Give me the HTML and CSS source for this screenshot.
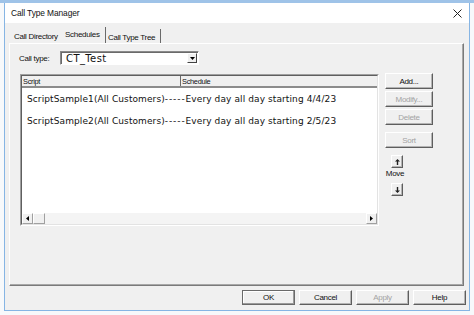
FILE: index.html
```html
<!DOCTYPE html>
<html>
<head>
<meta charset="utf-8">
<link rel="stylesheet" href="styles.css">
</head>
<body>
<div class="desk"></div>
<div class="window">
  <div class="titlebar">
    <span class="title">Call Type Manager</span>
    <svg class="close" width="9" height="9" viewBox="0 0 9 9"><path d="M0.5 0.5L8.5 8.5M8.5 0.5L0.5 8.5" stroke="#222" stroke-width="1"/></svg>
  </div>
  <div class="client">
    <div class="tabs">
      <div class="tab tab-dir">Call Directory</div>
      <div class="tab tab-sel">Schedules</div>
      <div class="tab tab-tree">Call Type Tree</div>
    </div>
    <div class="panel">
      <div class="typerow">
        <span class="label">Call type:</span>
        <div class="combo">
          <span class="combo-text">CT_Test</span>
          <div class="combo-btn"><svg width="5" height="3" viewBox="0 0 5 3"><path d="M0 0H5L2.5 3Z" fill="#000"/></svg></div>
        </div>
      </div>
      <div class="mainrow">
        <div class="list">
          <div class="list-in">
            <div class="lhead">
              <div class="hcell hcell-script">Script</div>
              <div class="hcell hcell-sched">Schedule</div>
            </div>
            <div class="lbody">
              <div class="lrow">ScriptSample1(All Customers)<span class="dash">-----</span>Every day all day starting 4/4/23</div>
              <div class="lrow">ScriptSample2(All Customers)<span class="dash">-----</span>Every day all day starting 2/5/23</div>
            </div>
            <div class="hscroll">
              <div class="sbtn"><svg width="3" height="5" viewBox="0 0 3 5"><path d="M3 0V5L0 2.5Z" fill="#000"/></svg></div>
              <div class="sbtn thumb"></div>
              <div class="track"></div>
              <div class="sbtn"><svg width="3" height="5" viewBox="0 0 3 5"><path d="M0 0V5L3 2.5Z" fill="#000"/></svg></div>
            </div>
          </div>
        </div>
        <div class="side">
          <div class="btn sidebtn">Add...</div>
          <div class="btn sidebtn dis">Modify...</div>
          <div class="btn sidebtn dis">Delete</div>
          <div class="btn sidebtn dis sort">Sort</div>
          <div class="move">
            <div class="btn arrowbtn"><svg width="5" height="6" viewBox="0 0 5 6"><path d="M2.5 0L5 2.5H3.2V6H1.8V2.5H0Z" fill="#222"/></svg></div>
            <div class="movelabel">Move</div>
            <div class="btn arrowbtn"><svg width="5" height="6" viewBox="0 0 5 6"><path d="M2.5 6L5 3.5H3.2V0H1.8V3.5H0Z" fill="#222"/></svg></div>
          </div>
        </div>
      </div>
    </div>
    <div class="footer">
      <div class="btn fbtn default">OK</div>
      <div class="btn fbtn">Cancel</div>
      <div class="btn fbtn dis">Apply</div>
      <div class="btn fbtn">Help</div>
    </div>
  </div>
</div>
</body>
</html>
```

FILE: styles.css
```css
html, body {
  margin: 0;
  padding: 0;
}
body {
  width: 474px;
  height: 315px;
  overflow: hidden;
  background: #f7f9fb;
  font-family: "Liberation Sans", Arial, sans-serif;
  color: #111;
}
.desk {
  height: 3px;
  background: #9fc3e8;
}
.window {
  margin-left: 4px;
  width: 466px;
  height: 308px;
  box-sizing: border-box;
  border: 1px solid #86b5e4;
  border-top: none;
  background: #f0f0f0;
  display: flex;
  flex-direction: column;
}
.titlebar {
  height: 20px;
  background: #fff;
  display: flex;
  align-items: center;
  padding-left: 6px;
  padding-right: 6px;
  justify-content: space-between;
}
.title {
  font-size: 8.4px;
  color: #111;
  letter-spacing: -0.1px;
}
.close {
  margin-right: 1px;
}
.client {
  flex: 1;
  padding: 4px 3px 0 4px;
  display: flex;
  flex-direction: column;
}
.tabs {
  height: 16px;
  display: flex;
  font-size: 8px;
  letter-spacing: -0.3px;
}
.tab {
  display: flex;
  align-items: center;
  box-sizing: border-box;
}
.tab-dir {
  width: 51px;
  padding-left: 5px;
  padding-top: 3px;
}
.tab-sel {
  width: 46px;
  padding-left: 5px;
  padding-bottom: 1px;
  border-right: 1px solid #6a6a6a;
}
.tab-tree {
  width: 55px;
  padding-left: 2px;
  padding-top: 3px;
  border-right: 1px solid #6a6a6a;
  height: 14px;
  margin-top: 2px;
}
.panel {
  height: 243px;
  margin-right: 2px;
  box-sizing: border-box;
  border-top: 1px solid #fff;
  border-left: 1px solid #fff;
  border-right: 1px solid #7a7a7a;
  border-bottom: 1px solid #7a7a7a;
  box-shadow: inset -1px -1px 0 #a8a8a8;
  padding: 7px 0 0 9px;
}
.typerow {
  display: flex;
  align-items: center;
  height: 14px;
}
.label {
  width: 41px;
  font-size: 8px;
  letter-spacing: -0.3px;
}
.combo {
  width: 139px;
  height: 14px;
  box-sizing: border-box;
  background: #fff;
  border-top: 1px solid #8a8a8a;
  border-left: 1px solid #8a8a8a;
  border-right: 1px solid #fff;
  border-bottom: 1px solid #fff;
  box-shadow: inset 1px 1px 0 #6a6a6a;
  display: flex;
  align-items: center;
  justify-content: space-between;
}
.combo-text {
  font-family: "DejaVu Sans", Verdana, sans-serif;
  font-size: 10px;
  letter-spacing: 0.4px;
  padding-left: 5px;
  color: #111;
}
.combo-btn {
  width: 10px;
  height: 10px;
  margin-right: 1px;
  box-sizing: border-box;
  background: #f0f0f0;
  border-top: 1px solid #fff;
  border-left: 1px solid #fff;
  border-right: 1px solid #444;
  border-bottom: 1px solid #444;
  display: flex;
  align-items: center;
  justify-content: center;
}
.mainrow {
  display: flex;
  margin-top: 9px;
  margin-left: 1px;
}
.list {
  width: 359px;
  height: 152px;
  box-sizing: border-box;
  border-top: 1px solid #a0a0a0;
  border-left: 1px solid #a0a0a0;
  border-right: 1px solid #fff;
  border-bottom: 1px solid #fff;
}
.list-in {
  height: 100%;
  box-sizing: border-box;
  border-top: 1px solid #5f5f5f;
  border-left: 1px solid #5f5f5f;
  border-right: 1px solid #e3e3e3;
  border-bottom: 1px solid #e3e3e3;
  background: #fff;
  display: flex;
  flex-direction: column;
}
.lhead {
  height: 10px;
  display: flex;
  background: #f0f0f0;
  border-bottom: 2px solid #8c8c8c;
  font-size: 7.4px;
  letter-spacing: -0.3px;
}
.hcell {
  display: flex;
  align-items: center;
  padding-left: 1px;
  box-sizing: border-box;
}
.hcell-script {
  width: 159px;
  border-right: 1px solid #6a6a6a;
}
.hcell-sched {
  flex: 1;
}
.lbody {
  flex: 1;
  padding-left: 5px;
}
.lrow {
  height: 22px;
  display: flex;
  align-items: center;
  font-family: "DejaVu Sans", Verdana, sans-serif;
  font-size: 9px;
  letter-spacing: 0.1px;
  color: #111;
  white-space: nowrap;
}
.dash {
  letter-spacing: 0.9px;
}
.hscroll {
  height: 11px;
  display: flex;
  background: #f4f4f4;
}
.sbtn {
  width: 11px;
  height: 11px;
  box-sizing: border-box;
  background: #f0f0f0;
  border-top: 1px solid #fff;
  border-left: 1px solid #fff;
  border-right: 1px solid #a0a0a0;
  border-bottom: 1px solid #a0a0a0;
  display: flex;
  align-items: center;
  justify-content: center;
}
.thumb {
  width: 12px;
}
.track {
  flex: 1;
}
.side {
  margin-left: 6px;
  margin-top: -1px;
  display: flex;
  flex-direction: column;
  gap: 2px;
}
.btn {
  box-sizing: border-box;
  background: #f0f0f0;
  border-top: 1px solid #fff;
  border-left: 1px solid #fff;
  border-right: 1px solid #5e5e5e;
  border-bottom: 1px solid #5e5e5e;
  box-shadow: inset -1px -1px 0 #b4b4b4;
  display: flex;
  align-items: center;
  justify-content: center;
  font-size: 8px;
  letter-spacing: -0.3px;
  color: #111;
}
.dis {
  color: #a3a3a3;
}
.sidebtn {
  width: 48px;
  height: 16px;
}
.sort {
  margin-top: 5px;
}
.move {
  display: flex;
  flex-direction: column;
  align-items: center;
  width: 19px;
  margin-top: 5px;
}
.arrowbtn {
  width: 12px;
  height: 13px;
  margin-left: 5px;
}
.movelabel {
  font-size: 8px;
  letter-spacing: -0.3px;
  height: 12px;
  line-height: 12px;
  margin-left: 1px;
  margin-bottom: 3px;
}
.footer {
  display: flex;
  justify-content: flex-end;
  gap: 4px;
  margin-top: 4px;
}
.fbtn {
  width: 53px;
  height: 15px;
}
.default {
  border: 1px solid #6a6a6a;
  box-shadow: inset -1px -1px 0 #9a9a9a, inset 1px 1px 0 #fff;
}
```
